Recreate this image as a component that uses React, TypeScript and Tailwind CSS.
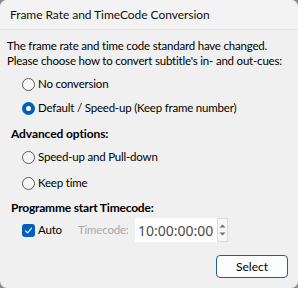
import React from "react";

function Radio({ checked, label }: { checked?: boolean; label: string }) {
  return (
    <div className="flex items-center h-[16px] pl-[15px] gap-[3px]">
      {checked ? (
        <span className="w-[13px] h-[13px] rounded-full bg-[#005fb8] flex items-center justify-center shrink-0">
          <span className="w-[5px] h-[5px] rounded-full bg-white" />
        </span>
      ) : (
        <span className="w-[13px] h-[13px] rounded-full border border-[#5a5a5a] bg-[#f7f7f7] shrink-0" />
      )}
      <span className="whitespace-nowrap">{label}</span>
    </div>
  );
}

export default function App() {
  return (
    <div className="w-[298px] h-[288px] bg-[#8a8a8a]">
      <div
        className="w-[298px] h-[288px] rounded-[7px] bg-[#f0f0f0] overflow-hidden text-[11.5px] tracking-[-0.2px] text-black flex flex-col"
        style={{ fontFamily: 'Lato, "Noto Sans", sans-serif' }}
      >
        <div className="h-[30px] shrink-0 bg-[#f3f3f3] border-b border-[#e3e3e3] flex items-center pl-[10px] text-[12px] tracking-[-0.05px] text-[#111111] whitespace-nowrap">
          Frame Rate and TimeCode Conversion
        </div>
        <div className="flex flex-col px-[7px] pt-[8px]">
          <p className="leading-[15px] whitespace-nowrap">
            The frame rate and time code standard have changed.
            <br />
            Please choose how to convert subtitle's in- and out-cues:
          </p>
          <div className="mt-[8px]">
            <Radio label="No conversion" />
          </div>
          <div className="mt-[8px]">
            <Radio checked label="Default / Speed-up (Keep frame number)" />
          </div>
          <div className="mt-[10px] h-[16px] flex items-center pl-[4px] font-bold text-[12px] tracking-[-0.1px]">
            Advanced options:
          </div>
          <div className="mt-[7px]">
            <Radio label="Speed-up and Pull-down" />
          </div>
          <div className="mt-[10px]">
            <Radio label="Keep time" />
          </div>
          <div className="mt-[9px] h-[16px] flex items-center pl-[4px] font-bold text-[12px] tracking-[-0.2px]">
            Programme start Timecode:
          </div>
          <div className="mt-[2px] h-[24px] flex items-center pl-[15px]">
            <span className="w-[13px] h-[13px] rounded-[3px] bg-[#005fb8] flex items-center justify-center shrink-0">
              <svg width="9" height="9" viewBox="0 0 9 9" fill="none">
                <path d="M1.5 4.8 L3.5 6.8 L7.6 2.2" stroke="white" strokeWidth="1.1" strokeLinecap="round" strokeLinejoin="round" />
              </svg>
            </span>
            <span className="ml-[3px] w-[40px] shrink-0">Auto</span>
            <span className="w-[57px] shrink-0 text-[#a8a8a8]">Timecode:</span>
            <div className="flex h-[24px]">
              <div
                className="w-[82px] h-[24px] bg-white flex items-center pl-[3px] text-[14px] tracking-normal text-[#4a4a4a]"
                style={{ fontFamily: '"Noto Sans", sans-serif' }}
              >
                10:00:00:00
              </div>
              <div className="w-[11px] h-[24px] bg-[#f7f7f7] border border-[#dadada] flex flex-col items-center justify-center gap-[4px]">
                <svg width="7" height="4" viewBox="0 0 7 4"><path d="M0.5 3.5 L3.5 0.5 L6.5 3.5 Z" fill="#707070" /></svg>
                <svg width="7" height="4" viewBox="0 0 7 4"><path d="M0.5 0.5 L3.5 3.5 L6.5 0.5 Z" fill="#707070" /></svg>
              </div>
            </div>
          </div>
          <div className="mt-[13px] flex justify-end pr-[3px]">
            <button className="w-[72px] h-[23px] rounded-[4px] border border-[#1f5f93] bg-[#fdfdfd] text-[12px] tracking-normal text-black flex items-center justify-center">
              Select
            </button>
          </div>
        </div>
      </div>
    </div>
  );
}
